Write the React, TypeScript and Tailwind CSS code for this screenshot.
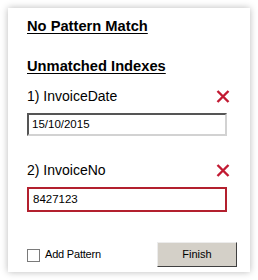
import React from "react";

function XIcon() {
  return (
    <svg width="14" height="13" viewBox="0 0 14 13" className="block">
      <path d="M1.5 1 L12.5 12 M12.5 1 L1.5 12" stroke="#c21a32" strokeWidth="2.4" strokeLinecap="butt" fill="none" />
    </svg>
  );
}

export default function App() {
  return (
    <div className="w-[258px] h-[280px] bg-white pt-[8px] pl-[8px]" style={{ fontFamily: '"Liberation Sans", Arial, sans-serif' }}>
      <div className="w-[242px] h-[264px] bg-white shadow-[0_0_7px_rgba(0,0,0,0.28)] pl-[19px] pt-[10px] flex flex-col">
        <div className="text-[14.7px] leading-[17px] font-bold underline underline-offset-[2px] text-black">No Pattern Match</div>
        <div className="mt-[23px] text-[14.7px] leading-[17px] font-bold underline underline-offset-[2px] text-black">Unmatched Indexes</div>

        <div className="mt-[12px] flex items-center justify-between w-[203px] h-[18px]">
          <span className="text-[14px] leading-[18px] text-black">1) InvoiceDate</span>
          <XIcon />
        </div>
        <div className="mt-[8px] w-[200px] h-[23px] border-2 border-t-[#555555] border-l-[#555555] border-r-[#d2d2d2] border-b-[#d2d2d2] bg-white flex items-center pl-[3px] text-[11.5px] text-black">
          15/10/2015
        </div>

        <div className="mt-[25px] flex items-center justify-between w-[203px] h-[18px]">
          <span className="text-[14px] leading-[18px] text-black">2) InvoiceNo</span>
          <XIcon />
        </div>
        <div className="mt-[8px] w-[200px] h-[25px] border-2 border-[#b3202e] bg-white flex items-center pl-[4px] text-[11.5px] text-black">
          8427123
        </div>

        <div className="mt-[30px] flex items-center w-[210px]">
          <div className="w-[13px] h-[13px] border border-[#7a7a7a] bg-white mt-[1px]" />
          <span className="ml-[5px] text-[11px] tracking-[-0.2px] text-black">Add Pattern</span>
          <div className="ml-auto w-[80px] h-[25px] bg-[#d4d0c8] border border-t-[#ececec] border-l-[#ececec] border-r-[#404040] border-b-[#404040] flex items-center justify-center text-[11px] text-black">
            Finish
          </div>
        </div>
      </div>
    </div>
  );
}
